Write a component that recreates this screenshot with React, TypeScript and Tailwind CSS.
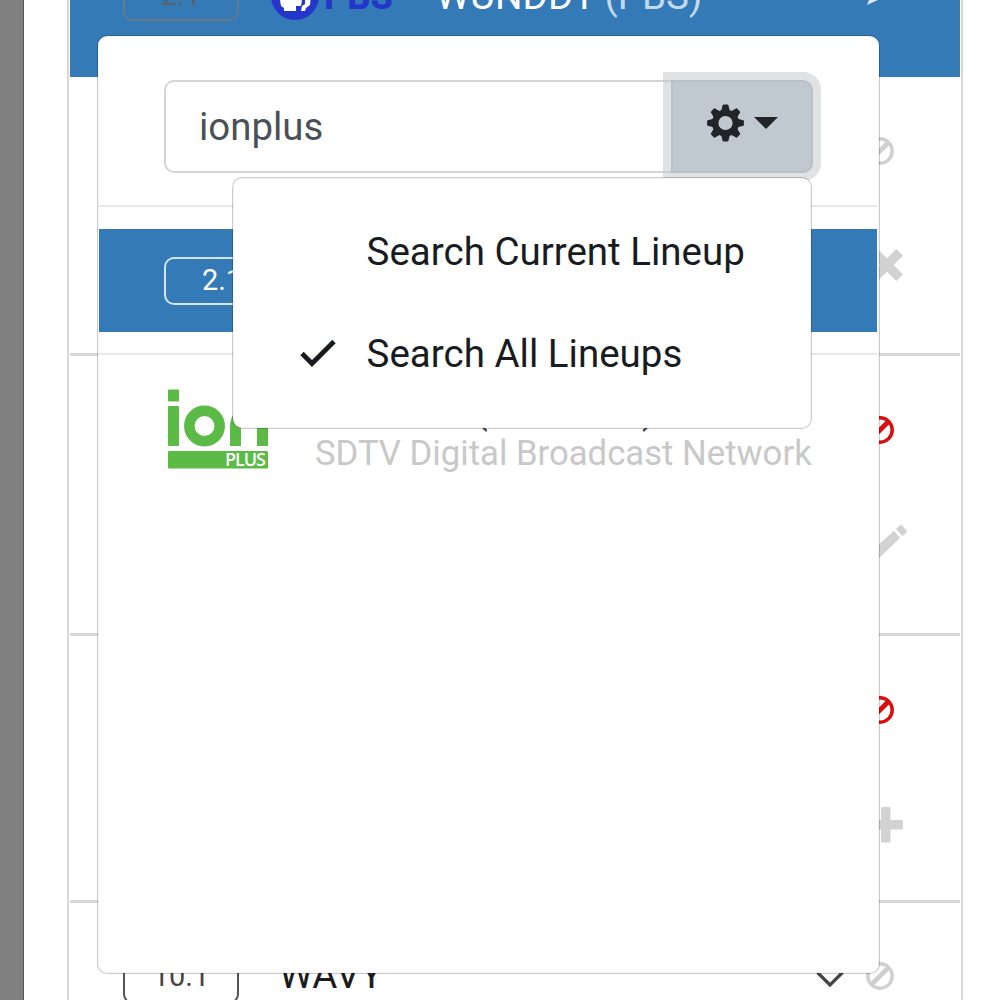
import clsx from 'clsx';

const lineupRows = [
  { height: 'h-[279px]', banned: false, action: 'close' },
  { height: 'h-[280px]', banned: true, action: 'edit' },
  { height: 'h-[267px]', banned: true, action: 'add' },
];

const searchModes = [
  { label: 'Search Current Lineup', selected: false },
  { label: 'Search All Lineups', selected: true },
];

function BanIcon({ className }: { className?: string }) {
  return (
    <svg viewBox="0 0 28 28" className={clsx('h-7 w-7', className)} fill="none" stroke="currentColor">
      <circle cx="14" cy="14" r="12.2" strokeWidth="3.5" />
      <path d="M5.5 22.5 22.5 5.5" strokeWidth="4.8" />
    </svg>
  );
}

function ActionIcon({ name }: { name: string }) {
  return (
    <svg
      viewBox="0 0 38 38"
      className="h-[38px] w-[38px] overflow-visible text-[#d2d2d2]"
      fill="currentColor"
    >
      {name === 'close' && (
        <path d="M3 8.7 9.7 2 19 11.3 28.3 2 35 8.7 25.7 18 35 27.3 28.3 34 19 24.7 9.7 34 3 27.3 12.3 18Z" />
      )}
      {name === 'edit' && (
        <path d="M0 38V28L26 5 32 12 11 32ZM28 3 32 -0.7Q33 -1.5 34 -0.7L38.5 4.5Q39.3 5.5 38.5 6.5L34.5 10Z" />
      )}
      {name === 'add' && (
        <path d="M14.5 1H21Q22.5 1 22.5 2.5V14H33.5Q35 14 35 15.5V22Q35 23.5 33.5 23.5H22.5V35Q22.5 36.5 21 36.5H14.5Q13 36.5 13 35V23.5H2.5Q1 23.5 1 22V15.5Q1 14 2.5 14H13V2.5Q13 1 14.5 1Z" />
      )}
    </svg>
  );
}

function PbsLogo() {
  return (
    <div className="flex items-end gap-[5px] text-[#2336c9]">
      <svg viewBox="0 0 48 48" className="h-12 w-12">
        <circle cx="24" cy="24" r="24" fill="currentColor" />
        <path
          d="M13 12H28V20L31 28 30 34H25V39H13V36L10 34 9 28ZM33 12 40 24 39 33 35 36 34 39H30L31 34 34 32V26Z"
          fill="#fff"
        />
      </svg>
      <span className="text-[36px] leading-[45px] font-extrabold">PBS</span>
    </div>
  );
}

function IonPlusLogo() {
  return (
    <svg viewBox="0 0 101 80" className="h-20 w-[101px] shrink-0 text-[#5cba46]">
      <g fill="currentColor">
        <rect x="0" y="0.5" width="11" height="12" rx="1" />
        <rect x="0" y="17" width="11" height="40" rx="1" />
        <path d="M62 57V39C62 24 71 17 81 17S100 24 100 39V57H89V40C89 31 86 28 81 28S73 31 73 40V57Z" />
        <rect x="0" y="62" width="100" height="17.5" rx="1" />
      </g>
      <circle cx="36.5" cy="37" r="15.2" fill="none" stroke="currentColor" strokeWidth="10.5" />
      <text
        x="57"
        y="77"
        fill="#fff"
        textLength="41"
        className="font-['Open_Sans',sans-serif] text-[18px] font-semibold"
      >
        PLUS
      </text>
    </svg>
  );
}

function GearIcon() {
  return (
    <svg viewBox="-19.5 -19 38 38" className="h-[38px] w-[38px]" fill="currentColor">
      {[0, 45, 90, 135].map((angle) => (
        <path
          key={angle}
          transform={`rotate(${angle})`}
          d="M-2-17.5H2L3.7-11H-3.7ZM-3.7 11H3.7L2 17.5H-2Z"
          stroke="currentColor"
          strokeWidth="1.8"
          strokeLinejoin="round"
        />
      ))}
      <circle r="10.3" fill="none" stroke="currentColor" strokeWidth="6.4" />
    </svg>
  );
}

function SearchMenu() {
  return (
    <ul className="absolute top-[97px] right-px flex h-[252px] w-[580px] flex-col rounded-[10px] border border-black/20 bg-white bg-clip-padding pt-[23px] text-[#191c1f] shadow-[inset_0_0_0_1px_rgba(0,0,0,0.04)]">
      {searchModes.map((mode) => (
        <li key={mode.label} className="flex h-[102px] items-center pl-[67px]">
          <span className="-mt-0.5 w-[66px]">
            {mode.selected && (
              <svg viewBox="0 0 36 28" className="h-7 w-9" fill="none" stroke="currentColor" strokeWidth="4.8">
                <path d="M2 14.5 12 24.5 34 2.5" />
              </svg>
            )}
          </span>
          <span className="ml-[0.6px] text-[38.5px] whitespace-nowrap">{mode.label}</span>
        </li>
      ))}
    </ul>
  );
}

function SearchBox() {
  return (
    <div className="relative z-10 flex h-[93px] w-[649px]">
      <div className="flex flex-1 items-center rounded-l-[10px] border-2 border-r-0 border-[#d2d4d7] pl-[33px] text-[38.4px] text-[#495057]">
        ionplus
      </div>
      <button className="flex w-[142px] items-center rounded-r-[10px] border-2 border-[#b8c1c9] bg-[#c1c9d0] pl-[33px] text-[#212529] shadow-[0_0_0_8px_rgba(193,197,200,0.5)]">
        <span className="mb-2 flex items-center gap-2.5">
          <GearIcon />
          <span className="border-x-[12px] border-t-[12px] border-x-transparent border-t-current" />
        </span>
      </button>
      <SearchMenu />
    </div>
  );
}

function SearchPanel() {
  return (
    <section className="absolute top-[35px] left-[97px] h-[939px] w-[783px] rounded-[10px] border border-black/20 bg-white bg-clip-padding shadow-[inset_0_0_0_1px_rgba(0,0,0,0.04)]">
      <div className="mr-0.5 ml-px flex h-[171px] items-start border-b-2 border-[#e6e7e8] pt-11 pl-[65px]">
        <SearchBox />
      </div>
      <div className="mr-0.5 ml-px flex h-[148px] items-center border-b-2 border-[#e6e7e8]">
        <div className="flex h-[103px] w-full items-center bg-[#337ab7] pt-px pl-[65px]">
          <span className="flex h-[48px] w-[116px] items-center justify-center rounded-[10px] border-2 border-[#d6e4f1] text-[29px] text-white">
            2.1
          </span>
        </div>
      </div>
      <div className="flex pt-[34px] pl-[70px]">
        <IonPlusLogo />
        <div className="ml-[46px] whitespace-nowrap">
          <div className="text-[38px] leading-[42px] text-[#212529]">
            IONPLUS <span className="-ml-1 text-[#444]">(IONPLUS)</span>
          </div>
          <div className="mt-px text-[34.7px] leading-[42px] text-[#c8c8c8]">
            SDTV Digital Broadcast Network
          </div>
        </div>
      </div>
    </section>
  );
}

export default function App() {
  return (
    <div className="relative flex h-[1000px] w-[990px] overflow-hidden bg-white font-[Roboto,sans-serif]">
      <aside className="w-6 border-r border-[#555] bg-[#808080]" />
      <main className="ml-[43px] flex h-full w-[896px] flex-col border-x-2 border-[#d8d8d8] px-px">
        <header className="flex h-[77px] shrink-0 items-start bg-[#337ab7]">
          <span className="-mt-[29px] ml-[53px] flex h-[50px] w-[116px] items-center justify-center rounded-[10px] border-2 border-[#68798a] text-[29px] text-[#59636d]">
            2.1
          </span>
          <div className="-mt-7 ml-8">
            <PbsLogo />
          </div>
          <div className="-mt-[29px] ml-[43px] w-[432px] text-[38.6px] leading-[50px] whitespace-nowrap text-white">
            WUNDDT <span className="text-[#c5d9ee]">(PBS)</span>
          </div>
          <svg viewBox="0 0 12 6" className="-ml-px h-1.5 w-3" fill="#dbe7f3">
            <path d="M2 0H11L0 5Z" />
          </svg>
        </header>
        {lineupRows.map((row) => (
          <div
            key={row.action}
            className={clsx('flex shrink-0 flex-col items-end border-b-[3px] border-[#d8d8d8]', row.height)}
          >
            <div className="flex w-[94px] flex-col pt-[60px]">
              <BanIcon className={row.banned ? 'text-[#d90d0d]' : 'text-[#d0d0d0]'} />
              <div className="mt-[82px] ml-[2px]">
                <ActionIcon name={row.action} />
              </div>
            </div>
          </div>
        ))}
        <footer className="flex shrink-0 items-start pt-[47px] pl-[53px]">
          <span className="flex h-[54px] w-[116px] items-center justify-center rounded-[10px] border-2 border-[#555] text-[29px] text-[#444]">
            10.1
          </span>
          <span className="ml-10 text-[38.4px] leading-[49px] text-[#191c1f]">WAVY</span>
          <svg viewBox="0 0 28 16" className="mt-[21px] ml-auto h-4 w-7" fill="none" stroke="#444" strokeWidth="3.2">
            <path d="M1.5 1.5 14 14 26.5 1.5" />
          </svg>
          <BanIcon className="mt-3 mr-[66px] ml-[22px] text-[#d0d0d0]" />
        </footer>
      </main>
      <SearchPanel />
    </div>
  );
}
